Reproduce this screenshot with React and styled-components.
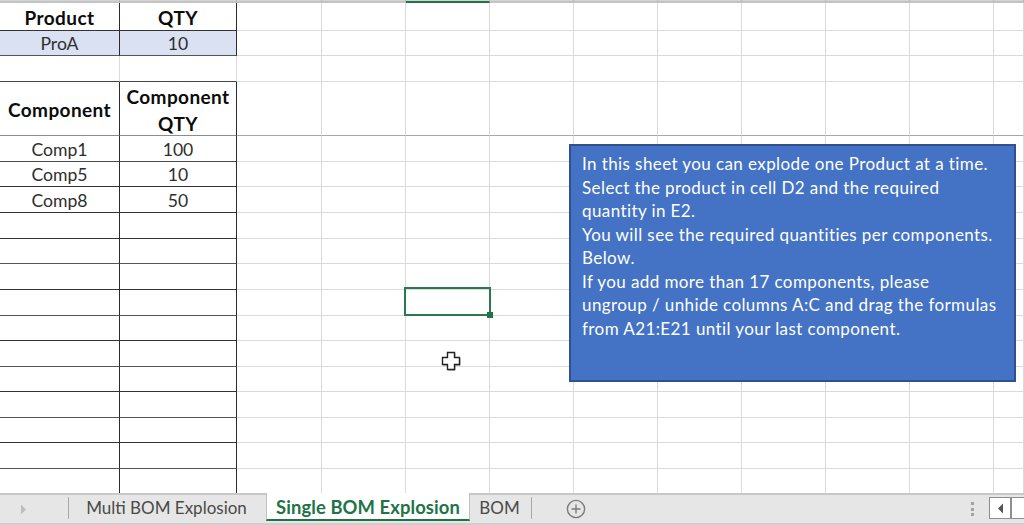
import React from "react";
import styled, { createGlobalStyle } from "styled-components";

const Global = createGlobalStyle`
  html, body { margin: 0; padding: 0; background: #fff; }
  body { width: 1024px; height: 525px; overflow: hidden; font-family: Lato, "Liberation Sans", sans-serif; }
`;

const Window = styled.div`
  position: relative;
  width: 1024px;
  height: 525px;
  overflow: hidden;
  display: flex;
  flex-direction: column;
`;

const Sheet = styled.div`
  height: 493px;
  flex: none;
  overflow: hidden;
  display: grid;
  grid-template-columns: 120px 117px 85px repeat(8, 84px) 1fr;
  grid-template-rows: 3px 28px 25px 26px 54px 26px 25px 26px 26px 25px 26px 26px 25px 26px 25px 26px 25px 26px 25px;
`;

const HeaderCell = styled.div`
  background: #d4d4d4;
  border-right: 1px solid #b8b8b8;
  border-bottom: 2px solid ${p => (p.$active ? "#217346" : "#c4c4c4")};
  box-sizing: border-box;
`;

const Cell = styled.div`
  position: relative;
  box-sizing: border-box;
  display: flex;
  align-items: center;
  justify-content: center;
  text-align: center;
  background: ${p => p.$fill || "#fff"};
  border-right: 1px solid ${p => (p.$dark ? "#2b2b2b" : "#dadada")};
  border-bottom: 1px solid ${p => p.$line || "#dadada"};
  color: ${p => (p.$bold ? "#0c0c0c" : "#2e2e2e")};
  font-size: ${p => (p.$bold ? 19 : 17.6)}px;
  letter-spacing: ${p => (p.$bold ? 0.4 : 0)}px;
  font-weight: ${p => (p.$bold ? 700 : 400)};
  line-height: 27px;
  padding-top: ${p => (p.$bold ? 2 : 1)}px;
`;

const Selection = styled.div`
  position: absolute;
  z-index: 2;
  left: -2px;
  right: -2px;
  top: -3px;
  bottom: -1px;
  border: 2px solid #2a7a50;
  pointer-events: none;
`;

const Handle = styled.span`
  position: absolute;
  right: -4px;
  bottom: -4px;
  width: 6px;
  height: 6px;
  box-sizing: border-box;
  background: #217346;
`;

const TextBox = styled.div`
  position: absolute;
  left: 569px;
  top: 144px;
  width: 447px;
  height: 238px;
  box-sizing: border-box;
  background: #4472c4;
  border: 2px solid #2f528f;
  padding: 6px 0 0 11px;
  color: #fff;
  font-size: 17px;
  letter-spacing: 0.41px;
  line-height: 23.55px;
`;

const TextLine = styled.div`
  white-space: nowrap;
`;

const Pointer = styled.svg`
  position: absolute;
  left: 440px;
  top: 350px;
`;

const TabBar = styled.div`
  flex: 1;
  display: flex;
  align-items: stretch;
  box-sizing: border-box;
  background: #e6e6e6;
  border-top: 2px solid #c8c8c8;
  border-bottom: 2px solid #cfcfcf;
  color: #4a4a4a;
  font-size: 17px;
`;

const NavSlot = styled.div`
  width: 68px;
  flex: none;
  display: flex;
  align-items: center;
  padding-left: 20px;
  box-sizing: border-box;
`;

const Divider = styled.span`
  width: 1px;
  height: 22px;
  margin-top: 2px;
  background: #a8a8a8;
  flex: none;
`;

const Tab = styled.div`
  flex: none;
  width: ${p => p.$w}px;
  box-sizing: border-box;
  display: flex;
  align-items: center;
  justify-content: center;
  white-space: nowrap;
  padding: 0 2px 3px 0;
  ${p => p.$active && `
    margin-top: -2px;
    background: #fff;
    color: #217346;
    font-size: 18.4px;
    letter-spacing: 0.1px;
    font-weight: 700;
    border-left: 1px solid #c0c0c0;
    border-right: 1px solid #c0c0c0;
    border-bottom: 2px solid #217346;
    height: 28px;
    padding: 1px 0 0;
  `}
`;

const AddSlot = styled.div`
  flex: none;
  margin-left: 33px;
  width: 22px;
  display: flex;
  align-items: center;
  justify-content: center;
`;

const Spacer = styled.div`
  flex: 1;
`;

const Dots = styled.div`
  flex: none;
  width: 3px;
  margin-right: 15px;
  display: flex;
  flex-direction: column;
  justify-content: center;
  gap: 2.5px;
`;

const Dot = styled.span`
  width: 3px;
  height: 3px;
  background: #a2a2a2;
`;

const ScrollGroup = styled.div`
  flex: none;
  display: flex;
  align-items: flex-start;
  padding-top: 2px;
`;

const ScrollButton = styled.div`
  width: ${p => (p.$open ? 13 : 22)}px;
  height: 22px;
  box-sizing: border-box;
  background: #fff;
  border: 1px solid #8f8f8f;
  border-right-width: ${p => (p.$open ? 0 : 1)}px;
  display: flex;
  align-items: center;
  justify-content: center;
`;

const rows = [
  { a: "Product", b: "QTY", bold: true, dark: true, line: "#333" },
  { a: "ProA", b: "10", fill: "#d9e1f2", dark: true, line: "#555" },
  { a: "", b: "", line: "#444" },
  { a: "Component", b: <>Component<br />QTY</>, bold: true, dark: true, line: "#8c8c8c", full: "#a6a6a6" },
  { a: "Comp1", b: "100", dark: true, line: "#4a4a4a" },
  { a: "Comp5", b: "10", dark: true, line: "#333" },
  { a: "Comp8", b: "50", dark: true, line: "#333" },
  ...Array.from({ length: 12 }, (_, i) => ({ a: "", b: "", dark: true, line: i % 2 ? "#555" : "#333" })),
];

const boxLines = [
  "In this sheet you can explode one Product at a time.",
  "Select the product in cell D2 and the required",
  "quantity in E2.",
  "You will see the required quantities per components.",
  "Below.",
  "If you add more than 17 components, please",
  "ungroup / unhide columns A:C and drag the formulas",
  "from A21:E21 until your last component.",
];

const emptyCols = Array.from({ length: 10 }, (_, i) => i);

export default function App() {
  return (
    <Window>
      <Global />
      <Sheet>
        {Array.from({ length: 12 }, (_, i) => (
          <HeaderCell key={i} $active={i === 4} />
        ))}
        {rows.map((r, ri) => (
          <React.Fragment key={ri}>
            <Cell $bold={r.bold} $dark={r.dark} $fill={r.fill} $line={r.line}>{r.a}</Cell>
            <Cell $bold={r.bold} $dark={r.dark} $fill={r.fill} $line={r.line}>{r.b}</Cell>
            {emptyCols.map(c => (
              <Cell key={c} $line={r.full}>
                {ri === 10 && c === 2 && (
                  <Selection>
                    <Handle />
                  </Selection>
                )}
              </Cell>
            ))}
          </React.Fragment>
        ))}
      </Sheet>
      <TabBar>
        <NavSlot>
          <svg width="7" height="11" viewBox="0 0 7 11"><path d="M1 0.5 L6 5.5 L1 10.5 Z" fill="#bdbdbd" /></svg>
        </NavSlot>
        <Divider />
        <Tab $w={197}>Multi BOM Explosion</Tab>
        <Tab $w={204} $active>Single BOM Explosion</Tab>
        <Tab $w={61}>BOM</Tab>
        <Divider />
        <AddSlot>
          <svg width="20" height="20" viewBox="0 0 20 20" fill="none" stroke="#7a7a7a">
            <circle cx="10" cy="10" r="8.6" strokeWidth="1.4" />
            <path d="M10 5.5V14.5M5.5 10H14.5" strokeWidth="1.4" />
          </svg>
        </AddSlot>
        <Spacer />
        <Dots><Dot /><Dot /><Dot /></Dots>
        <ScrollGroup>
          <ScrollButton>
            <svg width="7" height="11" viewBox="0 0 7 11"><path d="M6 0.5 L1 5.5 L6 10.5 Z" fill="#555" /></svg>
          </ScrollButton>
          <ScrollButton $open />
        </ScrollGroup>
      </TabBar>
      <TextBox>
        {boxLines.map(l => <TextLine key={l}>{l}</TextLine>)}
      </TextBox>
      <Pointer width="22" height="22" viewBox="0 0 22 22">
        <path d="M7.5 2.5H14.5V7.5H19.5V14.5H14.5V19.5H7.5V14.5H2.5V7.5H7.5Z" fill="#111" transform="translate(0.7 0.7)" />
        <path d="M7.5 2.5H14.5V7.5H19.5V14.5H14.5V19.5H7.5V14.5H2.5V7.5H7.5Z" fill="#fff" stroke="#222" strokeWidth="1.4" />
      </Pointer>
    </Window>
  );
}
